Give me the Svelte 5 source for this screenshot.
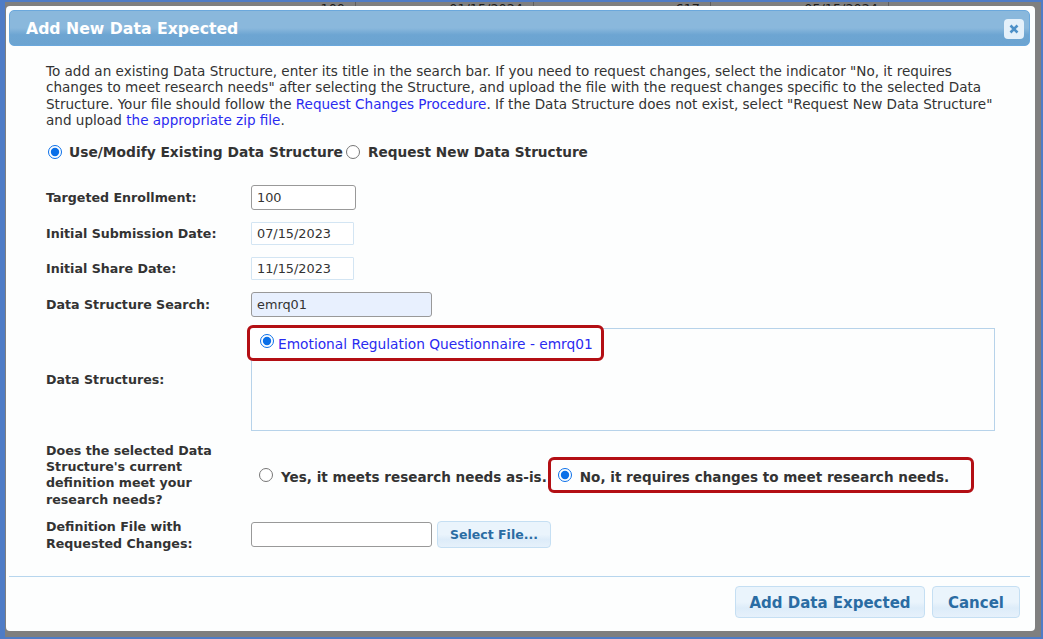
<script>
  const behind = ['100', '01/15/2024', '617', '05/15/2024'];

  let dataSource = 'existing';
  let meetsNeeds = 'no';
  let structure = 'emrq01';
</script>

<div class="page">
  <div class="behind">
    {#each behind as cell}
      <span>{cell}</span>
    {/each}
  </div>

  <div class="dialog">
    <header class="titlebar">
      <h1>Add New Data Expected</h1>
      <button class="close" aria-label="Close">
        <svg width="10" height="10" viewBox="0 0 10 10">
          <path d="M1.5 1.5l7 7M8.500 1.500l-7 7" stroke="#4d90c8" stroke-width="2.6" fill="none" />
        </svg>
      </button>
    </header>

    <div class="body">
      <p class="intro">
        To add an existing Data Structure, enter its title in the search bar. If you need to request changes, select the indicator "No, it requires changes to meet research needs" after selecting the Structure, and upload the file with the request changes specific to the selected Data Structure. Your file should follow the <a href="#procedure">Request Changes Procedure</a>. If the Data Structure does not exist, select "Request New Data Structure" and upload <a href="#zip">the appropriate zip file</a>.
      </p>

      <div class="source">
        <label class="radio"><input type="radio" bind:group={dataSource} value="existing" /><b>Use/Modify Existing Data Structure</b></label>
        <label class="radio"><input type="radio" bind:group={dataSource} value="new" /><b>Request New Data Structure</b></label>
      </div>

      <div class="form">
        <div class="label">Targeted Enrollment:</div>
        <div class="field r1"><input class="text enroll" value="100" /></div>

        <div class="label">Initial Submission Date:</div>
        <div class="field r2"><input class="text date" value="07/15/2023" /></div>

        <div class="label">Initial Share Date:</div>
        <div class="field r3"><input class="text date" value="11/15/2023" /></div>

        <div class="label">Data Structure Search:</div>
        <div class="field r4"><input class="text search" value="emrq01" /></div>

        <div class="label list-label">Data Structures:</div>
        <div class="listbox">
          <label class="hit">
            <input type="radio" bind:group={structure} value="emrq01" />
            <span>Emotional Regulation Questionnaire - emrq01</span>
          </label>
        </div>

        <div class="label question">Does the selected Data Structure's current definition meet your research needs?</div>
        <div class="answers">
          <label class="radio yes"><input type="radio" bind:group={meetsNeeds} value="yes" /><b>Yes, it meets research needs as-is.</b></label>
          <label class="radio no"><input type="radio" bind:group={meetsNeeds} value="no" /><b>No, it requires changes to meet research needs.</b></label>
        </div>

        <div class="label file-label">Definition File with Requested Changes:</div>
        <div class="file">
          <input class="text filename" />
          <button class="btn small">Select File...</button>
        </div>
      </div>
    </div>

    <footer class="actions">
      <button class="btn add">Add Data Expected</button>
      <button class="btn cancel">Cancel</button>
    </footer>
  </div>
</div>

<style>
  :global(body) {
    margin: 0;
    background: #7f7f7f;
  }
  .page {
    height: 639px;
    position: relative;
    overflow: hidden;
    box-sizing: border-box;
    border-style: solid;
    border-color: #4f7cc6;
    border-width: 2px 2px 2px 5px;
    background: #7f7f7f;
    font-family: "DejaVu Sans", Verdana, sans-serif;
    color: #333;
  }
  .behind {
    display: grid;
    grid-template-columns: 351px 178px 177px 178px;
    font-size: 12.8px;
    line-height: 14px;
    color: #1c1c1c;
  }
  .behind span {
    box-sizing: border-box;
    text-align: right;
    padding-right: 10px;
    border-right: 1px solid #5f5f5f;
  }

  .dialog {
    position: absolute;
    left: 1px;
    top: 4px;
    width: 1029px;
    height: 625px;
    box-sizing: border-box;
    padding: 4px 5px 0 3px;
    background: #fdfefe;
    border-radius: 4px;
    display: flex;
    flex-direction: column;
  }
  .titlebar {
    height: 36px;
    flex: none;
    box-sizing: border-box;
    border: 1px solid #6ba8dc;
    border-radius: 5px;
    background: linear-gradient(#8ab8dc 0%, #8ab8dc 50%, #6da5d2 70%, #6ca4d1 100%);
    display: flex;
    align-items: center;
    justify-content: space-between;
    padding: 0 5px 0 16px;
  }
  h1 {
    margin: 1px 0 0 0;
    font-size: 15.7px;
    font-weight: bold;
    color: #fff;
  }
  .close {
    width: 20px;
    height: 20px;
    margin-top: 1px;
    padding: 0;
    border: none;
    border-radius: 4px;
    background: #e4f0fa;
    display: flex;
    align-items: center;
    justify-content: center;
  }
  .body {
    flex: 1;
    padding: 0 35px 0 37px;
    font-size: 13.55px;
  }
  .intro {
    margin: 17px 0 0 0;
    line-height: 16.4px;
  }
  a {
    color: #2a2af0;
    text-decoration: none;
  }
  .source {
    display: flex;
    margin-top: 14px;
    font-size: 13.8px;
    height: 18px;
    align-items: center;
  }
  .source b {
    padding-top: 1px;
  }
  .source .radio:last-child {
    font-size: 13.65px;
  }
  .radio {
    display: flex;
    align-items: center;
  }
  .radio input, .hit input {
    width: 14px;
    height: 14px;
    margin: 0;
    accent-color: #0a6fe8;
    flex: none;
  }
  .source .radio:first-child input {
    margin: 0 7px 0 2px;
  }
  .source .radio:last-child input {
    margin: 0 8px 0 3px;
  }
  .form {
    display: grid;
    grid-template-columns: 205px 744px;
    align-items: center;
    margin-top: 19px;
    font-size: 12.65px;
  }
  .label {
    font-weight: bold;
    line-height: 16.4px;
    padding-top: 2px;
  }
  .field {
    display: flex;
    align-items: center;
  }
  .r1 { height: 35px; }
  .r2 { height: 37px; }
  .r3 { height: 33px; }
  .r4 { height: 39px; }
  .text {
    box-sizing: border-box;
    font-family: inherit;
    font-size: 12.85px;
    color: #333;
    border: 1px solid #999;
    border-radius: 3px;
    padding: 0 5px;
    outline: none;
    background: #fff;
    display: block;
  }
  .enroll { width: 105px; height: 25px; }
  .date {
    width: 103px;
    height: 23px;
    border: 1px solid #d3e5f3;
    border-radius: 1px;
  }
  .search {
    width: 181px;
    height: 25px;
    background: #e8f0fe;
  }
  .list-label {
    margin-top: 4px;
  }
  .listbox {
    height: 103px;
    margin-top: 4px;
    box-sizing: border-box;
    border: 1px solid #b7d3ea;
  }
  .hit {
    display: inline-flex;
    align-items: center;
    box-sizing: border-box;
    height: 36px;
    margin: -4px 0 0 -5px;
    padding: 0 9px 0 10px;
    border: 3px solid #b30f14;
    border-radius: 6px;
    background: #fff;
    color: #2a2af0;
    width: 357px;
    gap: 4px;
    font-size: 13.75px;
    white-space: nowrap;
  }
  .hit input { margin-top: -3px; }
  .hit span { padding-top: 3px; }
  .question {
    width: 175px;
    margin-top: 12px;
    padding-top: 0;
  }
  .answers {
    display: flex;
    align-items: center;
    margin-top: 12px;
    font-size: 13.55px;
  }
  .answers b {
    padding-top: 3px;
  }
  .yes {
    margin-left: 8px;
  }
  .yes input {
    margin-right: 8px;
  }
  .no {
    box-sizing: border-box;
    height: 36px;
    width: 426px;
    border: 3px solid #b30f14;
    border-radius: 6px;
    padding-left: 7px;
    margin-left: 1px;
  }
  .no input {
    margin-right: 8px;
  }
  .file-label {
    margin-top: 8px;
    padding-top: 3px;
  }
  .file {
    display: flex;
    align-items: center;
    gap: 5px;
    margin-top: 9px;
  }
  .filename { width: 181px; height: 25px; }
  .btn {
    font-family: "DejaVu Sans", Verdana, sans-serif;
    font-weight: bold;
    color: #2a6ca3;
    border: 1px solid #c5dff3;
    border-radius: 4px;
    background: linear-gradient(#eaf4fc 0%, #eaf4fc 50%, #ddecf9 70%, #e6f1fb 100%);
    padding: 0;
  }
  .small {
    width: 114px;
    height: 27px;
    font-size: 12.5px;
  }
  .actions {
    flex: none;
    height: 55px;
    box-sizing: border-box;
    border-top: 1px solid #b7d6ee;
    display: flex;
    justify-content: flex-end;
    gap: 7px;
    padding: 9px 10px 0 0;
  }
  .add, .cancel {
    height: 32px;
    font-size: 15px;
    padding-top: 1px;
  }
  .add { width: 190px; }
  .cancel { width: 88px; }
</style>
